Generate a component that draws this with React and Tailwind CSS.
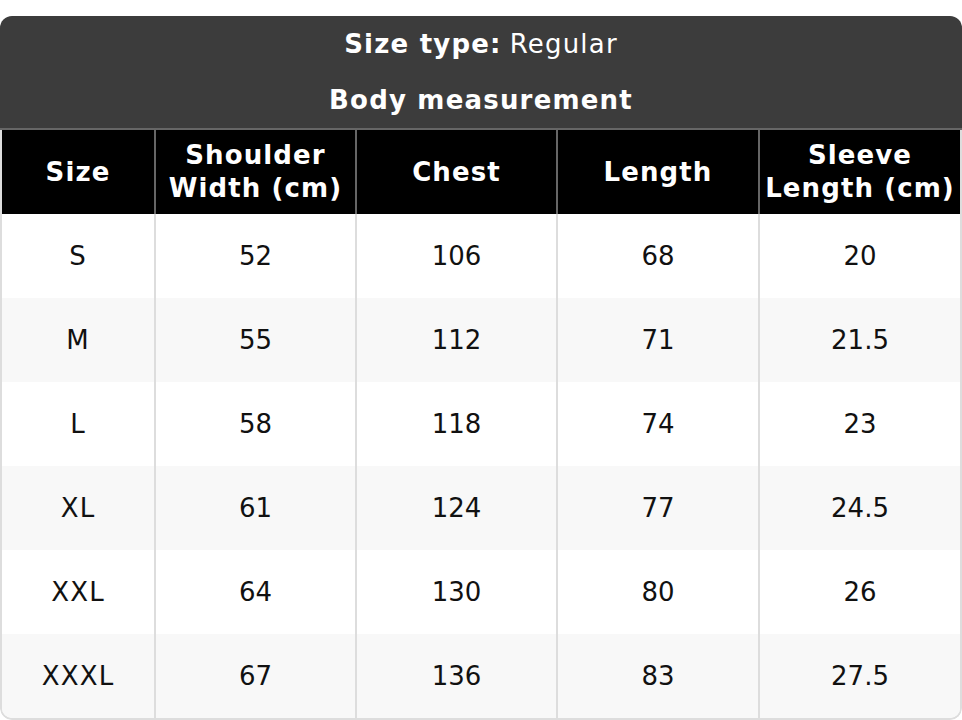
import React from 'react';

const columns = [
  ['Size'],
  ['Shoulder', 'Width (cm)'],
  ['Chest'],
  ['Length'],
  ['Sleeve', 'Length (cm)'],
];

const rows = [
  ['S', '52', '106', '68', '20'],
  ['M', '55', '112', '71', '21.5'],
  ['L', '58', '118', '74', '23'],
  ['XL', '61', '124', '77', '24.5'],
  ['XXL', '64', '130', '80', '26'],
  ['XXXL', '67', '136', '83', '27.5'],
];

const grid = 'grid grid-cols-[152px_2px_199px_2px_199px_2px_200px_2px_200px]';

function Divider({ dark }) {
  return <div className={dark ? 'bg-[#666666]' : 'bg-[#dddddd]'} />;
}

function Row({ cells, className, dark, cellClass, firstClass = '' }) {
  const out = [];
  cells.forEach((c, i) => {
    if (i > 0) out.push(<Divider key={'d' + i} dark={dark} />);
    out.push(
      <div
        key={i}
        className={'flex flex-col items-center justify-center text-center ' + cellClass + (i === 0 ? ' ' + firstClass : '')}
      >
        {c}
      </div>
    );
  });
  return <div className={grid + ' ' + className}>{out}</div>;
}

export default function App() {
  return (
    <div className="min-h-screen bg-white pt-[16px]" style={{ fontFamily: '"DejaVu Sans", sans-serif' }}>
      <div className="w-[962px] rounded-[12px] overflow-hidden">
        <div className="bg-[#3c3c3c] text-white text-[26px] tracking-[1.2px] border-b-2 border-[#666666]">
          <div className="h-[56px] flex items-center justify-center">
            <span className="font-bold">Size type:</span>
            <span className="ml-[8px]">Regular</span>
          </div>
          <div className="h-[56px] flex items-center justify-center font-bold">Body measurement</div>
        </div>
        <div className="border-x-2 border-b-2 border-[#dddddd] rounded-b-[12px] overflow-hidden">
          <Row
            dark
            className="h-[84px] bg-black text-white"
            cellClass="text-[26px] font-bold leading-[33px] tracking-[1.1px]"
            cells={columns.map((lines) => lines.map((l) => <span key={l}>{l}</span>))}
          />
          {rows.map((r, i) => (
            <Row
              key={r[0]}
              className={'h-[84px] text-[#111111] ' + (i % 2 === 1 ? 'bg-[#f8f8f8]' : 'bg-white')}
              cellClass="text-[26px]"
              firstClass="tracking-[1.2px]"
              cells={r}
            />
          ))}
        </div>
      </div>
    </div>
  );
}
